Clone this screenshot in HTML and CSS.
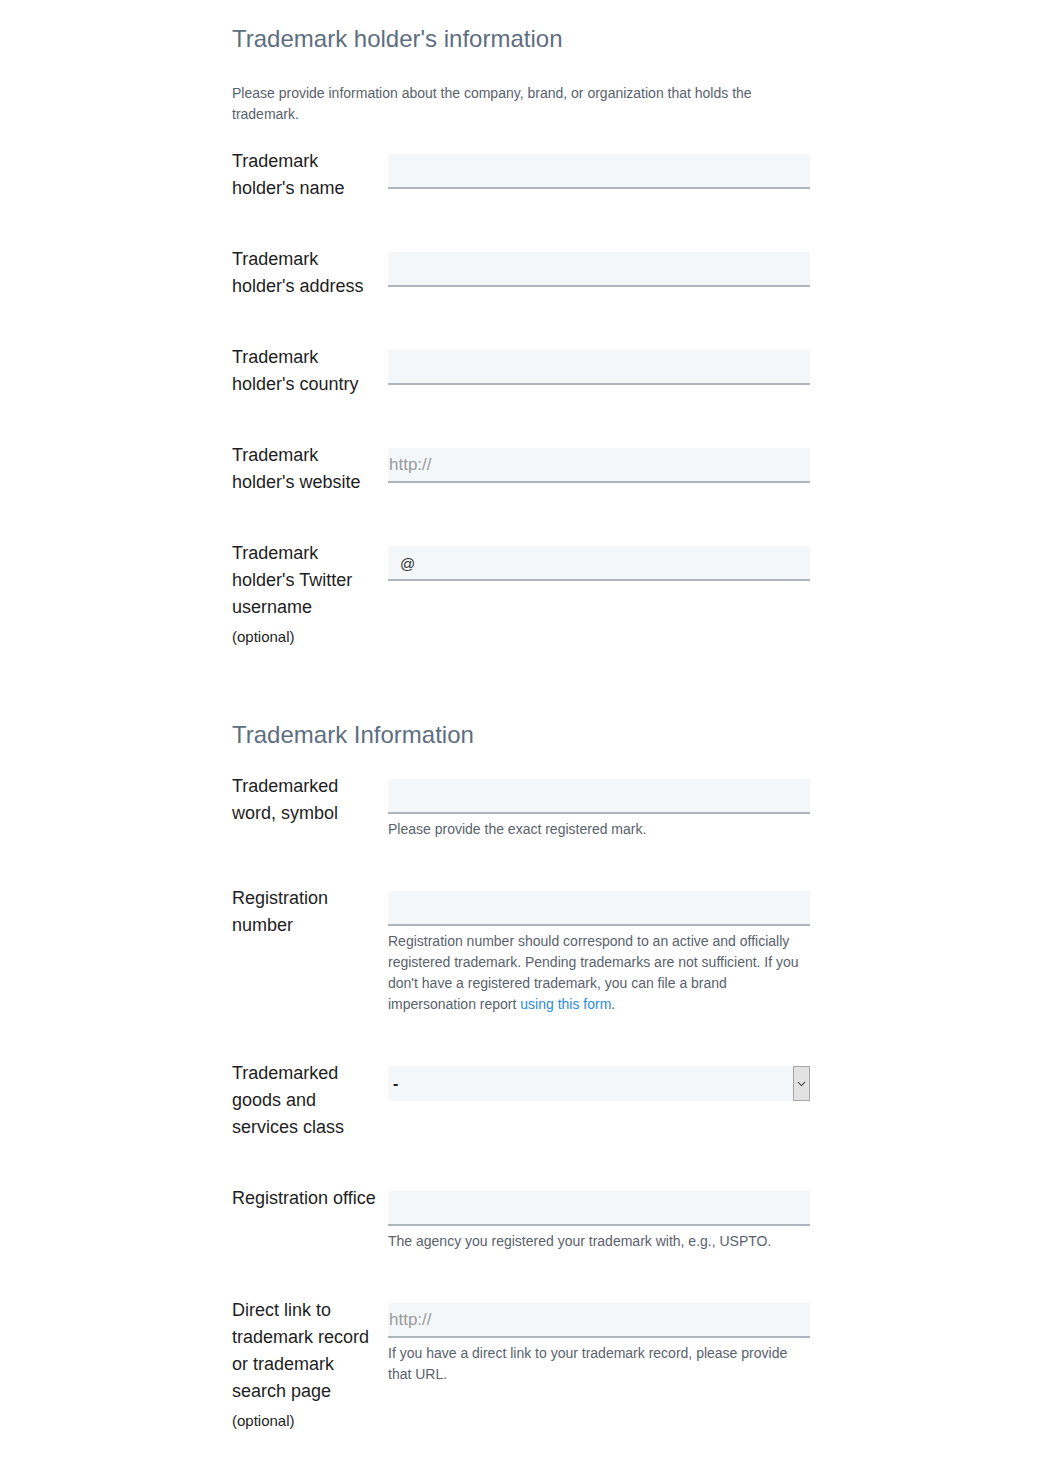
FILE: index.html
```html
<!DOCTYPE html>
<html>
<head>
<meta charset="utf-8">
<link rel="stylesheet" href="styles.css">
</head>
<body>
<div class="page">
  <section class="section">
    <h2 class="heading">Trademark holder's information</h2>
    <p class="intro">Please provide information about the company, brand, or organization that holds the trademark.</p>

    <div class="row">
      <label class="label">Trademark holder's name</label>
      <div class="field"><div class="input"></div></div>
    </div>
    <div class="row">
      <label class="label">Trademark holder's address</label>
      <div class="field"><div class="input"></div></div>
    </div>
    <div class="row">
      <label class="label">Trademark holder's country</label>
      <div class="field"><div class="input"></div></div>
    </div>
    <div class="row">
      <label class="label">Trademark holder's website</label>
      <div class="field"><div class="input"><span class="placeholder">http://</span></div></div>
    </div>
    <div class="row">
      <label class="label">Trademark holder's Twitter username <span class="optional">(optional)</span></label>
      <div class="field"><div class="input"><span class="prefix">@</span></div></div>
    </div>
  </section>

  <section class="section second">
    <h2 class="heading">Trademark Information</h2>

    <div class="row">
      <label class="label">Trademarked word, symbol</label>
      <div class="field">
        <div class="input"></div>
        <p class="help">Please provide the exact registered mark.</p>
      </div>
    </div>
    <div class="row">
      <label class="label">Registration number</label>
      <div class="field">
        <div class="input"></div>
        <p class="help">Registration number should correspond to an active and officially registered trademark. Pending trademarks are not sufficient. If you don't have a registered trademark, you can file a brand impersonation report <a class="link" href="#">using this form</a>.</p>
      </div>
    </div>
    <div class="row">
      <label class="label">Trademarked goods and services class</label>
      <div class="field">
        <div class="select">
          <span class="select-value">-</span>
          <span class="select-btn"><svg width="9" height="6" viewBox="0 0 9 6"><path d="M1 1.2 L4.5 4.6 L8 1.2" fill="none" stroke="#444" stroke-width="1.1"/></svg></span>
        </div>
      </div>
    </div>
    <div class="row">
      <label class="label">Registration office</label>
      <div class="field">
        <div class="input"></div>
        <p class="help">The agency you registered your trademark with, e.g., USPTO.</p>
      </div>
    </div>
    <div class="row">
      <label class="label">Direct link to trademark record or trademark search page <span class="optional">(optional)</span></label>
      <div class="field">
        <div class="input"><span class="placeholder">http://</span></div>
        <p class="help">If you have a direct link to your trademark record, please provide that URL.</p>
      </div>
    </div>
  </section>
</div>
</body>
</html>
```

FILE: styles.css
```css
* { box-sizing: border-box; }
html, body { margin: 0; padding: 0; background: #fff; }
body {
  font-family: "Liberation Sans", Arial, sans-serif;
  color: #222;
}
.page {
  width: 578px;
  margin-left: 232px;
  padding-top: 24px;
  padding-bottom: 30px;
}
.heading {
  margin: 0;
  font-size: 24px;
  line-height: 29px;
  font-weight: normal;
  color: #5e6e81;
}
.intro {
  margin: 30px 0 23px;
  font-size: 14px;
  line-height: 21px;
  color: #59626d;
}
.second { margin-top: 70px; }
.second .heading { margin-bottom: 24px; }
.row {
  display: flex;
  margin-bottom: 44px;
}
.label {
  width: 156px;
  flex: 0 0 156px;
  padding-right: 8px;
  font-size: 18px;
  line-height: 27px;
  color: #1e1e1e;
}
.optional {
  display: block;
  font-size: 15px;
  line-height: 27px;
  padding-top: 2px;
}
.field {
  flex: 1;
  padding-top: 6px;
}
.input {
  height: 35px;
  background: #f4f7fa;
  border-bottom: 2px solid #adb6bf;
  display: flex;
  align-items: center;
}
.placeholder {
  padding-left: 1px;
  font-size: 17px;
  color: #9a9a9a;
}
.prefix {
  padding-left: 12px;
  font-size: 15px;
  color: #333;
  padding-top: 1px;
}
.help {
  margin: 5px 0 1px;
  font-size: 14px;
  line-height: 21px;
  color: #59626d;
}
.link { color: #2a8be0; text-decoration: none; }
.select {
  height: 35px;
  background: #f4f7fa;
  display: flex;
  align-items: center;
  justify-content: space-between;
}
.select-value {
  padding-left: 5px;
  font-size: 16px;
  font-weight: bold;
  color: #222;
}
.select-btn {
  width: 17px;
  height: 35px;
  background: #e2e2e2;
  border: 1px solid #a6a6a6;
  display: flex;
  align-items: center;
  justify-content: center;
}
```
